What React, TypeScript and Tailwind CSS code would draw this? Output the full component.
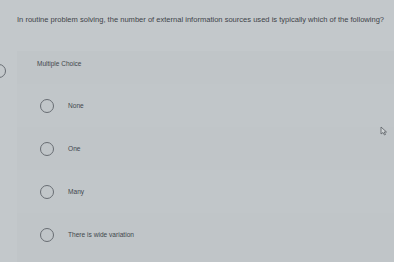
import React from "react";

const options = ["None", "One", "Many", "There is wide variation"];

function Radio() {
  return <div className="h-[14px] w-[14px] shrink-0 rounded-full border border-[#686d73]" />;
}

export default function App() {
  return (
    <div
      className="relative h-[262px] w-[394px] overflow-hidden bg-[#c3c8cb] text-[#42474d]"
      style={{ fontFamily: '"Liberation Sans", Arial, sans-serif' }}
    >
      <div className="px-[17px] pt-[16px] text-[7.55px] leading-[8px] whitespace-nowrap text-[#3f444a]">
        In routine problem solving, the number of external information sources used is typically which of the following?
      </div>
      <div className="absolute left-[-8px] top-[64px] h-[14px] w-[14px] rounded-full border border-[#686d73]" />
      <div className="ml-[17px] mt-[27px] h-[220px] bg-[#c0c5c8]">
        <div className="pl-[20px] pt-[9px] text-[6.5px] leading-[8px]">Multiple Choice</div>
        <div className="mt-[16px] flex flex-col">
          {options.map((o, i) => (
            <div
              key={o}
              className={`flex h-[43px] items-center gap-[14px] pl-[23px] ${i % 2 === 0 ? "bg-[#c1c6c9]" : "bg-[#c0c5c8]"}`}
            >
              <Radio />
              <span className="text-[6.6px] leading-[8px]">{o}</span>
            </div>
          ))}
        </div>
      </div>
      <svg className="absolute left-[380px] top-[126px]" width="7" height="10" viewBox="0 0 7 10">
        <path d="M1 1 L1 8 L3 6.5 L4.5 9 L5.5 8.5 L4.2 6 L6.5 6 Z" fill="#d0d4d6" stroke="#5a5f65" strokeWidth="0.8" />
      </svg>
    </div>
  );
}
